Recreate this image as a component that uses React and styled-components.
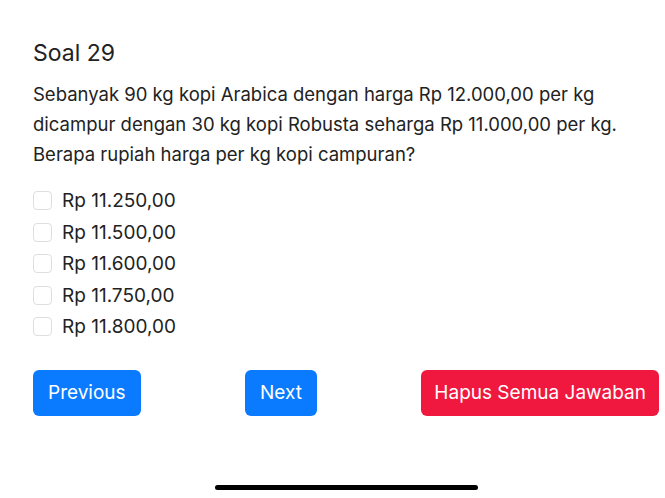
import React from "react";
import styled, { createGlobalStyle } from "styled-components";

const GlobalStyle = createGlobalStyle`
  html, body {
    margin: 0;
    padding: 0;
    background: #ffffff;
  }
  body {
    font-family: "Inter", "Liberation Sans", sans-serif;
    color: #212529;
  }
`;

const Screen = styled.div`
  width: 665px;
  height: 498px;
  box-sizing: border-box;
  display: flex;
  flex-direction: column;
  padding: 38px 6px 0 33px;
  position: relative;
  overflow: hidden;
`;

const Title = styled.h2`
  margin: 0;
  font-size: 23px;
  font-weight: 400;
  line-height: 30px;
  color: #222;
`;

const Question = styled.p`
  margin: 11px 0 0;
  font-size: 18.5px;
  line-height: 30px;
  color: #222;
`;

const Options = styled.div`
  display: flex;
  flex-direction: column;
  margin-top: 16px;
`;

const Option = styled.label`
  display: flex;
  align-items: center;
  gap: 10px;
  height: 31.5px;
  font-size: 19px;
  color: #222;
`;

const Box = styled.span`
  width: 19px;
  height: 19px;
  border: 1px solid #dedede;
  border-radius: 4px;
  box-sizing: border-box;
  background: #fff;
`;

const Actions = styled.div`
  display: flex;
  justify-content: space-between;
  margin-top: 27px;
`;

const Button = styled.button`
  height: 46px;
  padding: 0 ${(p) => (p.$danger ? "13px" : "15px")};
  border: none;
  border-radius: 6px;
  font-family: "Inter", "Liberation Sans", sans-serif;
  font-size: 19px;
  color: #fff;
  background: ${(p) => (p.$danger ? "#f0183f" : "#0a7bff")};
`;

const HomeBar = styled.div`
  position: absolute;
  left: 215px;
  bottom: 8px;
  width: 263px;
  height: 5px;
  border-radius: 3px;
  background: #000;
`;

const answers = [
  "Rp 11.250,00",
  "Rp 11.500,00",
  "Rp 11.600,00",
  "Rp 11.750,00",
  "Rp 11.800,00",
];

export default function App() {
  return (
    <>
      <GlobalStyle />
      <Screen>
        <Title>Soal 29</Title>
        <Question>
          Sebanyak 90 kg kopi Arabica dengan harga Rp 12.000,00 per kg
          dicampur dengan 30 kg kopi Robusta seharga Rp 11.000,00 per kg.
          Berapa rupiah harga per kg kopi campuran?
        </Question>
        <Options>
          {answers.map((a) => (
            <Option key={a}>
              <Box />
              {a}
            </Option>
          ))}
        </Options>
        <Actions>
          <Button>Previous</Button>
          <Button>Next</Button>
          <Button $danger>Hapus Semua Jawaban</Button>
        </Actions>
        <HomeBar />
      </Screen>
    </>
  );
}
